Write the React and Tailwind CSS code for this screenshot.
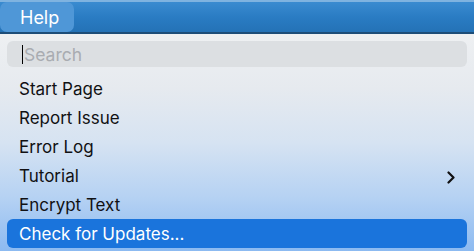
import React from 'react';

export default function App() {
  const items = ['Start Page', 'Report Issue', 'Error Log', 'Tutorial', 'Encrypt Text', 'Check for Updates...'];
  const font = { fontFamily: 'Inter, "Liberation Sans", sans-serif' };

  return (
    <div className="w-[474px] h-[251px] overflow-hidden flex flex-col" style={font}>
      {/* menu bar */}
      <div className="h-[34px] shrink-0 bg-gradient-to-b from-[#3a8bd0] via-[#2a7cc3] to-[#2472b6] border-t-2 border-t-[#7fb3e0] border-b-2 border-b-[#1d4d78] flex">
        <div className="w-[74px] h-full rounded-[7px] bg-[#4f97d7] flex items-center pl-[20px] pt-[1px] text-white text-[18px] leading-none">
          Help
        </div>
      </div>

      {/* dropdown */}
      <div className="flex-1 px-[7px] pt-[7px] bg-[linear-gradient(to_bottom,#eef0f2_0%,#e6eaef_25%,#d6e3f2_50%,#b6d2f3_75%,#8cbaf1_100%)]">
        <div className="h-[26px] rounded-[6px] bg-[#dcdfe2] flex items-center pl-[15px] pt-[2px] text-[17.5px] text-[#a9acb1]">
          <span className="w-px h-[19px] bg-black mr-[1px] -mt-[2px]" />
          Search
        </div>
        <div className="mt-[7px] flex flex-col">
          {items.map((label, i) => {
            const active = i === items.length - 1;
            return (
              <div
                key={label}
                className={`h-[29px] rounded-[6px] flex items-center justify-between pl-[12px] pr-[10px] pt-[3px] text-[17px] ${
                  active ? 'bg-[#1a74dc] text-white' : 'text-[#111113]'
                }`}
              >
                <span>{label}</span>
                {label === 'Tutorial' && (
                  <svg width="10" height="13" viewBox="0 0 10 13" className="mr-[1px]">
                    <path d="M2.5 1.5 L7.5 6.5 L2.5 11.5" fill="none" stroke="#111113" strokeWidth="2.2" strokeLinecap="round" strokeLinejoin="round" />
                  </svg>
                )}
              </div>
            );
          })}
        </div>
      </div>
    </div>
  );
}
